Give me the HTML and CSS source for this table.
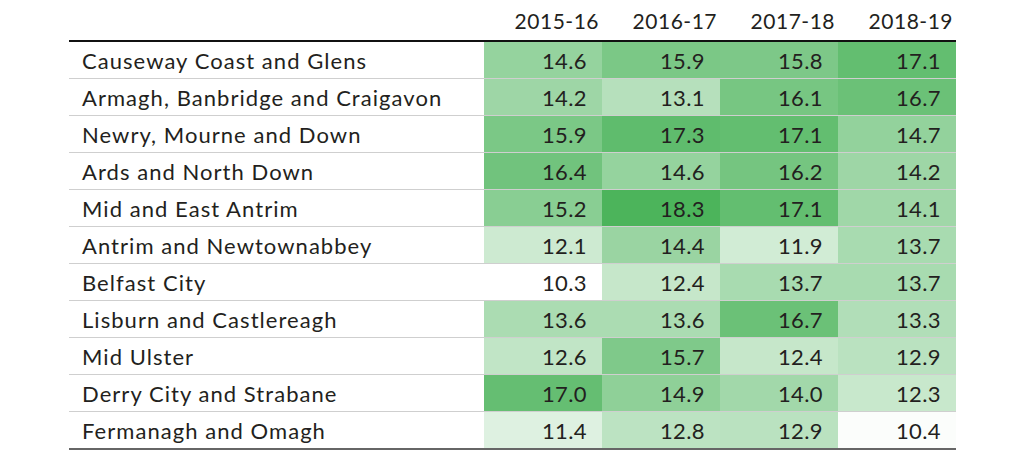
FILE: index.html
```html
<!DOCTYPE html>
<html>
<head>
<meta charset="utf-8">
<link rel="stylesheet" href="styles.css">
</head>
<body>
<div class="table">
  <div class="row head">
    <div class="label"></div>
    <div class="yr">2015-16</div>
    <div class="yr">2016-17</div>
    <div class="yr">2017-18</div>
    <div class="yr">2018-19</div>
  </div>
  <div class="row">
    <div class="label">Causeway Coast and Glens</div>
    <div class="val" style="background:#95d39e">14.6</div>
    <div class="val" style="background:#7bc886">15.9</div>
    <div class="val" style="background:#7dc888">15.8</div>
    <div class="val" style="background:#63be70">17.1</div>
  </div>
  <div class="row">
    <div class="label">Armagh, Banbridge and Craigavon</div>
    <div class="val" style="background:#9ed6a6">14.2</div>
    <div class="val" style="background:#b6e0bc">13.1</div>
    <div class="val" style="background:#77c682">16.1</div>
    <div class="val" style="background:#6bc177">16.7</div>
  </div>
  <div class="row">
    <div class="label">Newry, Mourne and Down</div>
    <div class="val" style="background:#7bc886">15.9</div>
    <div class="val" style="background:#5fbc6d">17.3</div>
    <div class="val" style="background:#63be70">17.1</div>
    <div class="val" style="background:#93d29c">14.7</div>
  </div>
  <div class="row">
    <div class="label">Ards and North Down</div>
    <div class="val" style="background:#71c37d">16.4</div>
    <div class="val" style="background:#95d39e">14.6</div>
    <div class="val" style="background:#75c580">16.2</div>
    <div class="val" style="background:#9ed6a6">14.2</div>
  </div>
  <div class="row">
    <div class="label">Mid and East Antrim</div>
    <div class="val" style="background:#89ce93">15.2</div>
    <div class="val" style="background:#4cb45b">18.3</div>
    <div class="val" style="background:#63be70">17.1</div>
    <div class="val" style="background:#a0d7a8">14.1</div>
  </div>
  <div class="row">
    <div class="label">Antrim and Newtownabbey</div>
    <div class="val" style="background:#cdead1">12.1</div>
    <div class="val" style="background:#9ad4a2">14.4</div>
    <div class="val" style="background:#d1ecd5">11.9</div>
    <div class="val" style="background:#a8dbb0">13.7</div>
  </div>
  <div class="row">
    <div class="label">Belfast City</div>
    <div class="val" style="background:#ffffff">10.3</div>
    <div class="val" style="background:#c6e7ca">12.4</div>
    <div class="val" style="background:#a8dbb0">13.7</div>
    <div class="val" style="background:#a8dbb0">13.7</div>
  </div>
  <div class="row">
    <div class="label">Lisburn and Castlereagh</div>
    <div class="val" style="background:#abdcb2">13.6</div>
    <div class="val" style="background:#abdcb2">13.6</div>
    <div class="val" style="background:#6bc177">16.7</div>
    <div class="val" style="background:#b1deb8">13.3</div>
  </div>
  <div class="row">
    <div class="label">Mid Ulster</div>
    <div class="val" style="background:#c1e5c6">12.6</div>
    <div class="val" style="background:#7fc98a">15.7</div>
    <div class="val" style="background:#c6e7ca">12.4</div>
    <div class="val" style="background:#bae2c0">12.9</div>
  </div>
  <div class="row">
    <div class="label">Derry City and Strabane</div>
    <div class="val" style="background:#65be72">17.0</div>
    <div class="val" style="background:#8fd098">14.9</div>
    <div class="val" style="background:#a2d8aa">14.0</div>
    <div class="val" style="background:#c8e8cc">12.3</div>
  </div>
  <div class="row last">
    <div class="label">Fermanagh and Omagh</div>
    <div class="val" style="background:#def1e1">11.4</div>
    <div class="val" style="background:#bce3c2">12.8</div>
    <div class="val" style="background:#bae2c0">12.9</div>
    <div class="val" style="background:#fbfdfb">10.4</div>
  </div>
</div>
</body>
</html>
```

FILE: styles.css
```css
html, body {
  margin: 0;
  padding: 0;
  background: #ffffff;
}
body {
  font-family: "Lato", "Liberation Sans", sans-serif;
  color: #231f20;
}
.table {
  margin-left: 69px;
  width: 887px;
  display: flex;
  flex-direction: column;
}
.row {
  display: grid;
  grid-template-columns: 415px repeat(4, 118px);
  height: 36px;
  border-bottom: 1px solid #cfcfcf;
}
.row.head {
  height: 40px;
  border-bottom: 2px solid #111111;
}
.row.last {
  border-bottom: 2px solid #666666;
}
.label {
  display: flex;
  align-items: center;
  padding-left: 13px;
  font-size: 22px;
  letter-spacing: 1.05px;
}
.yr {
  display: flex;
  align-items: center;
  justify-content: flex-end;
  padding-right: 3px;
  font-size: 21px;
  letter-spacing: 0.5px;
}
.val {
  display: flex;
  align-items: center;
  justify-content: flex-end;
  padding-right: 15px;
  font-size: 22px;
  letter-spacing: 0.4px;
}
```
